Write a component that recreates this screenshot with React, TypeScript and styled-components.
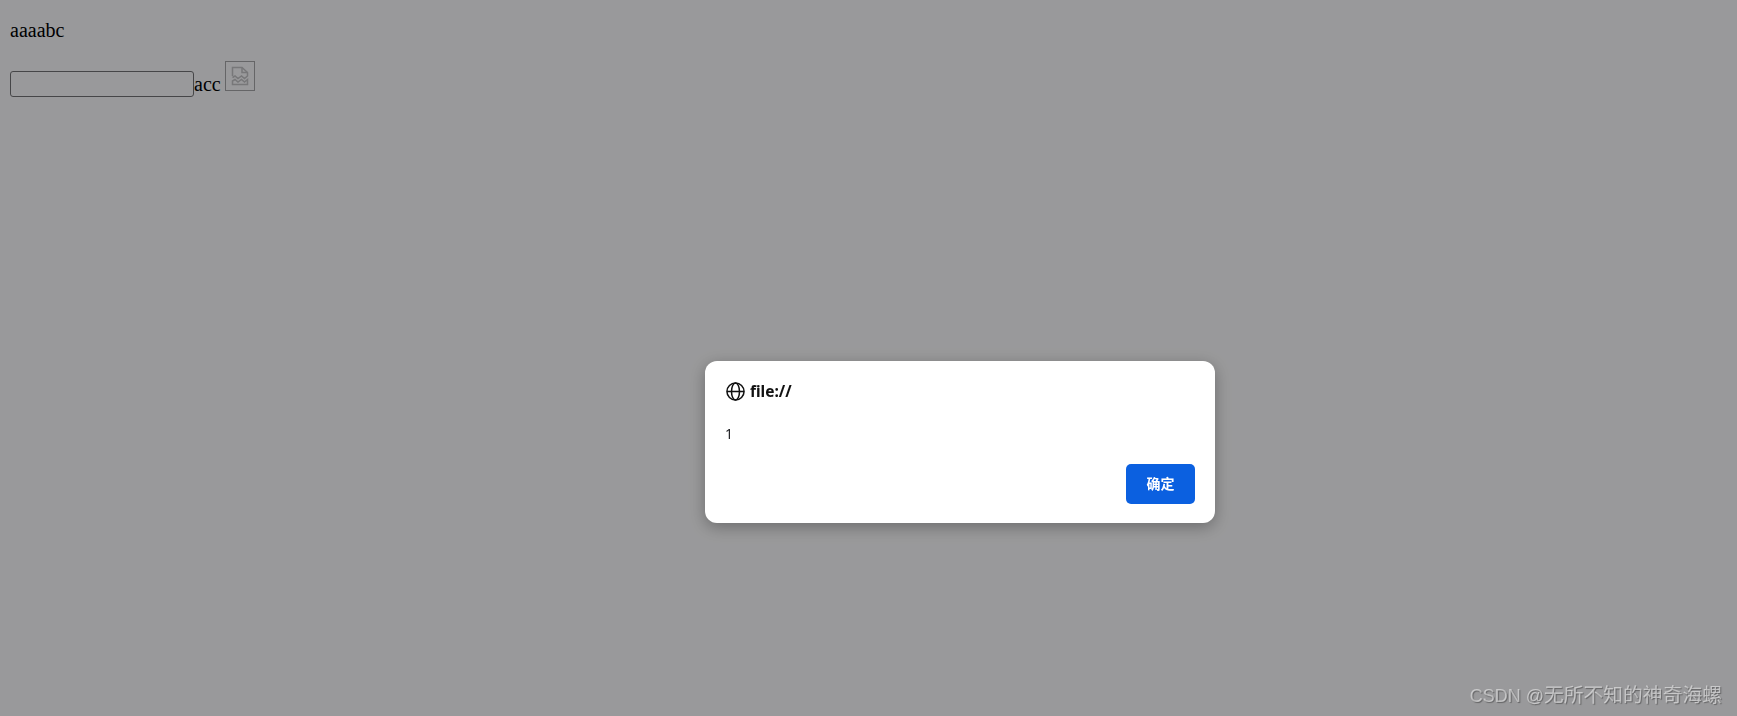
import React, { FC } from 'react'
import styled, { createGlobalStyle } from 'styled-components'

const GlobalStyle = createGlobalStyle`
  html, body {
    margin: 0;
    padding: 0;
    height: 100%;
    background: #fff;
  }
  body {
    overflow: hidden;
  }
`

const Page = styled.div`
  height: 716px;
  padding: 19px 10px 0;
  box-sizing: border-box;
  font-family: "Liberation Serif", "Times New Roman", serif;
  font-size: 20px;
  color: #000;
`

const Line = styled.p`
  margin: 0 0 19px;
  line-height: 23px;
`

const FormRow = styled.div`
  line-height: 23px;
`

const TextBox = styled.input`
  width: 184px;
  height: 26px;
  padding: 0;
  box-sizing: border-box;
  border: 1px solid #767676;
  border-radius: 3px;
  background: #fff;
  vertical-align: 3px;
`

const BrokenImage = styled.span`
  display: inline-block;
  overflow: hidden;
  width: 30px;
  height: 30px;
  margin-left: 4px;
  box-sizing: border-box;
  border: 1px solid #a9a9a9;

  svg {
    display: block;
    margin: 4px auto 0;
  }
`

const Overlay = styled.div`
  position: fixed;
  inset: 0;
  background: rgba(0, 0, 5, 0.4);
`

const Dialog = styled.div`
  position: fixed;
  left: 705px;
  top: 361px;
  width: 510px;
  height: 162px;
  box-sizing: border-box;
  padding: 20px 20px 19px 21px;
  display: flex;
  flex-direction: column;
  border-radius: 12px;
  background: #fff;
  box-shadow: 0 4px 16px rgba(0, 0, 0, 0.3);
  font-family: "Noto Sans", "Open Sans", "Noto Sans CJK SC", sans-serif;
`

const Title = styled.div`
  display: flex;
  align-items: center;
  gap: 5px;
  height: 20px;
  font-size: 15.5px;
  line-height: 20px;
  font-weight: 700;
  color: #111;
`

const Message = styled.div`
  margin-top: 23px;
  margin-left: -1px;
  font-size: 14px;
  line-height: 20px;
  color: #202124;
`

const Actions = styled.div`
  display: flex;
  justify-content: flex-end;
  margin-top: auto;
`

const OkButton = styled.button`
  width: 69px;
  height: 40px;
  padding: 0 0 2px;
  border: 0;
  border-radius: 5px;
  background: #0b60e0;
  color: #fff;
  font-family: "Noto Sans CJK SC", sans-serif;
  font-size: 14px;
  font-weight: 700;
`

const Watermark = styled.div`
  position: fixed;
  right: 15px;
  bottom: 7px;
  font-family: "Liberation Sans", "Noto Sans CJK SC", sans-serif;
  font-size: 19.8px;
  line-height: 26px;
  color: rgba(255, 255, 255, 0.5);
  text-shadow: 1px 1px 1px rgba(0, 0, 0, 0.35);
  white-space: nowrap;
`

const WatermarkLatin = styled.span`
  font-size: 18px;
`

const GlobeIcon: FC = () => (
  <svg width="19" height="19" viewBox="0 0 20 20" fill="none" stroke="#111" strokeWidth="1.6">
    <circle cx="10" cy="10" r="9" />
    <ellipse cx="10" cy="10" rx="4.2" ry="9" />
    <path d="M1 10h18" />
  </svg>
)

const BrokenIcon: FC = () => (
  <svg width="18" height="20" viewBox="0 0 18 20" fill="none" stroke="#c6c6c6" strokeWidth="1.5">
    <path d="M1.500 10V1.500h9.500l5.500 5V10l-3 2.500-3-2.500-3.500 2.500L4 10l-2.500 1.500" />
    <path d="M11 1.500V6.500h5.500" />
    <path d="M1.500 15l2.500-1.500 3 2.500 3.500-2.500 3 2.500 3-2.500v5H1.500z" />
  </svg>
)

const App: FC = () => {
  return (
    <>
      <GlobalStyle />
      <Page>
        <Line>aaaabc</Line>
        <FormRow>
          <TextBox type="text" />
          acc
          <BrokenImage>
            <BrokenIcon />
          </BrokenImage>
        </FormRow>
      </Page>
      <Overlay />
      <Dialog>
        <Title>
          <GlobeIcon />
          file://
        </Title>
        <Message>1</Message>
        <Actions>
          <OkButton>确定</OkButton>
        </Actions>
      </Dialog>
      <Watermark>
        <WatermarkLatin>CSDN @</WatermarkLatin>无所不知的神奇海螺
      </Watermark>
    </>
  )
}

export default App
